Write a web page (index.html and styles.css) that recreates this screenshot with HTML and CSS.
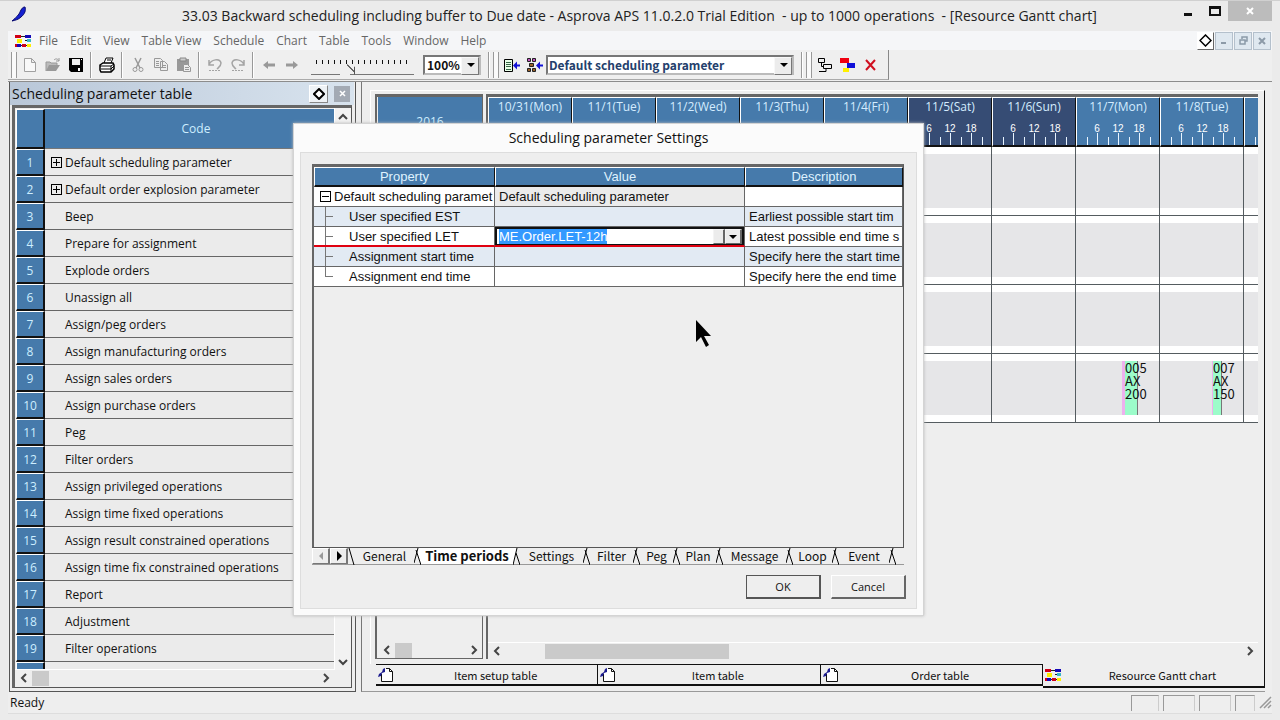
FILE: index.html
```html
<!DOCTYPE html>
<html lang="en">
<head>
    <meta charset="UTF-8">
    <meta name="viewport" content="width=device-width, initial-scale=1.0">
    <title>Asprova APS - Resource Gantt chart</title>
    <link rel="stylesheet" href="styles.css">
</head>
<body>
    <!-- Shared icons -->
    <svg class="sprite" aria-hidden="true">
        <symbol id="left" viewBox="0 0 10 10"><path d="M7 1L3 5l4 4" fill="none" stroke="#444" stroke-width="2"/></symbol>
        <symbol id="right" viewBox="0 0 10 10"><path d="M3 1l4 4-4 4" fill="none" stroke="#444" stroke-width="2"/></symbol>
        <symbol id="up" viewBox="0 0 10 10"><path d="M1 7l4-4 4 4" fill="none" stroke="#444" stroke-width="2"/></symbol>
        <symbol id="down" viewBox="0 0 10 10"><path d="M1 3l4 4 4-4" fill="none" stroke="#444" stroke-width="2"/></symbol>
        <symbol id="diamond" viewBox="0 0 12 12"><path d="M6 1l5 5-5 5-5-5z" fill="#fff" stroke="#000" stroke-width="2"/></symbol>
        <symbol id="gantt" viewBox="0 0 16 12">
            <path d="M4 1.500h8M10 5.500h3M3 10.500h10" stroke="#222"/>
            <path d="M0 0h6v3H0zM7 9h4v3H7z" fill="#d00018"/>
            <path d="M10 0h6v3h-6zM2 9h4v3H2z" fill="#1408b8"/>
            <path d="M2 4h5v4H2zM12 9h4v3h-4z" fill="#fff000"/>
            <path d="M12 4h4v3h-4z" fill="#38b8c8"/>
            <path d="M0 9h2v3H0z" fill="#d00018"/>
        </symbol>
        <symbol id="sheet" viewBox="0 0 16 16">
            <path d="M3.500 7v7.500h11V4.500l-3-3H8" fill="#fff" stroke="#111"/>
            <path d="M11.500 1.500v3h3" fill="none" stroke="#111"/>
            <path d="M7 1v4L4 6l-1 3-3 1 1-3 3-2 1-3z" fill="#1c1c90"/>
        </symbol>
    </svg>

    <div class="window">
        <!-- Title bar -->
        <header class="titlebar">
            <svg class="app-icon" viewBox="0 0 16 16"><path d="M14 1c1 3 0 7-4 10-3 3-6 3-9 4 2-2 5-4 7-7 2-4 3-7 6-7z" fill="#1420d0" stroke="#08086c"/></svg>
            <h1>33.03 Backward scheduling including buffer to Due date - Asprova APS 11.0.2.0 Trial Edition &nbsp;- up to 1000 operations &nbsp;- [Resource Gantt chart]</h1>
            <div class="win-buttons">
                <button aria-label="Minimize"><svg width="10" height="10"><path d="M1 8.500h8" stroke="#111" stroke-width="3"/></svg></button>
                <button aria-label="Maximize"><svg width="12" height="10"><path d="M1 1h10v8H1zM1 2h10" fill="none" stroke="#111" stroke-width="2"/></svg></button>
                <button class="close" aria-label="Close"><svg width="8" height="8"><path d="M1 1l6 6M7 1L1 7" stroke="#fff" stroke-width="2"/></svg></button>
            </div>
        </header>

        <!-- Menu bar -->
        <nav class="menubar">
            <svg class="gantt-icon"><use href="#gantt"/></svg>
            <button>File</button>
            <button>Edit</button>
            <button>View</button>
            <button>Table View</button>
            <button>Schedule</button>
            <button>Chart</button>
            <button>Table</button>
            <button>Tools</button>
            <button>Window</button>
            <button>Help</button>
            <div class="mdi-buttons">
                <button class="pin" aria-label="Pin"><svg width="13" height="13" viewBox="0 0 13 13"><path d="M6.500 1L12 6.500 6.500 12 1 6.500z" fill="none" stroke="#000" stroke-width="1.500"/></svg></button>
                <button aria-label="Minimize chart"><svg width="8" height="8"><path d="M1 6h5" stroke="#8c9aa8" stroke-width="2"/></svg></button>
                <button aria-label="Restore chart"><svg width="9" height="9"><path d="M3 3V1h5v4H6M1 4h5v4H1z" fill="none" stroke="#8c9aa8" stroke-width="1.500"/></svg></button>
                <button aria-label="Close chart"><svg width="8" height="8"><path d="M1 1l6 6M7 1L1 7" stroke="#8c9aa8" stroke-width="2"/></svg></button>
            </div>
        </nav>

        <!-- Tool bar -->
        <div class="toolbar">
            <div class="tools">
                <span class="grip"></span>
                <button aria-label="New"><svg width="16" height="16"><path d="M2.500 1.500h7l4 4v9h-11zM9.500 1.500v4h4" fill="#f8f8f8" stroke="#a0a0a0"/></svg></button>
                <button aria-label="Open"><svg width="16" height="16"><path d="M1 14V5h4l1 1h6v2" fill="#bbb" stroke="#999"/><path d="M1 14l3-6h11l-4 6z" fill="#999"/><path d="M9 3c2-2 4-1 5 1m0-3v3h-3" fill="none" stroke="#999"/></svg></button>
                <button aria-label="Save"><svg width="16" height="16"><path d="M1 1h14v14H3l-2-2z" fill="#000"/><path d="M4 2h8v6H4z" fill="#eee"/><path d="M10 11h2v3h-2zM13 2h1v1h-1z" fill="#fff"/></svg></button>
                <span class="sep"></span>
                <button aria-label="Print"><svg width="16" height="16"><path d="M5 6l2-5h7l-2 5" fill="#fff" stroke="#000"/><path d="M1 8l3-2h10l1 2v4l-3 3H2l-1-2z" fill="#fff" stroke="#000" stroke-width="1.500"/><path d="M1 9h11l3-2M2 12h10l3-3M8 3h4M12 9v6" fill="none" stroke="#000"/></svg></button>
                <span class="sep"></span>
                <button aria-label="Cut"><svg width="16" height="16"><path d="M5 1l5 10M11 1L6 11" stroke="#999" stroke-width="1.500"/><circle cx="5" cy="12.500" r="2" fill="none" stroke="#999"/><circle cx="11" cy="12.500" r="2" fill="none" stroke="#999"/></svg></button>
                <button aria-label="Copy"><svg width="16" height="16"><path d="M1.500 1.500h6l2 2v7h-8zM7.500 4.500h4l3 3v6h-7z" fill="#eee" stroke="#999"/><path d="M3 4.500h3M3 6.500h3M3 8.500h3M9 8.500h4M9 10.500h4" stroke="#999"/></svg></button>
                <button aria-label="Paste"><svg width="16" height="16"><path d="M1 2h12v12H1z" fill="#999"/><path d="M4 1h6v3H4z" fill="#ccc" stroke="#888"/><path d="M7.500 7.500h4l3 3v4h-7z" fill="#eee" stroke="#999"/><path d="M9 10.500h4M9 12.500h4" stroke="#999"/></svg></button>
                <span class="sep"></span>
                <button aria-label="Undo"><svg width="16" height="16"><path d="M2 3v5h5M2 8c2-6 11-7 12-2 0 3-2 4-4 6" fill="none" stroke="#a4a4a4" stroke-width="1.500"/><path d="M2 13.500h12" stroke="#a4a4a4" stroke-dasharray="2 1"/></svg></button>
                <button aria-label="Redo"><svg width="16" height="16"><path d="M14 3v5H9M14 8C12 2 3 1 2 6c0 3 2 4 4 6" fill="none" stroke="#a4a4a4" stroke-width="1.500"/><path d="M2 13.500h12" stroke="#a4a4a4" stroke-dasharray="2 1"/></svg></button>
                <span class="sep"></span>
                <button aria-label="Back"><svg width="16" height="16"><path d="M2 8l5-4v2.500h7v3H7V12z" fill="#999"/></svg></button>
                <button aria-label="Forward"><svg width="16" height="16"><path d="M14 8L9 4v2.500H2v3h7V12z" fill="#999"/></svg></button>
                <input class="zoom-slider" type="range" min="0" max="100" value="36" aria-label="Zoom">
                <span class="combo zoom"><select aria-label="Zoom level"><option>100%</option></select></span>
                <span class="sep"></span>
                <span class="grip"></span>
                <button aria-label="Reschedule"><svg width="17" height="16"><path d="M1.500 2.500h8v12h-8z" fill="#e8ffe8" stroke="#000"/><path d="M3 5.500h5M3 7.500h5M3 9.500h5M3 12.500h5" stroke="#386848"/><path d="M10 8.500l4-4v3h3v2h-3v3z" fill="#1414d8"/></svg></button>
                <button aria-label="Explode"><svg width="17" height="16"><path d="M1.500 1.500h3v3h-3zM6.500 1.500h3v3h-3z" fill="#c050c0" stroke="#222"/><path d="M3.500 6.500h4v3h-4zM1.500 11.500h3v3h-3zM6.500 11.500h3v3h-3z" fill="#986028" stroke="#222"/><path d="M10 8.500l4-4v3h3v2h-3v3z" fill="#1414d8"/></svg></button>
                <span class="combo param"><select aria-label="Scheduling parameter"><option>Default scheduling parameter</option></select></span>
                <span class="sep"></span>
                <span class="grip"></span>
                <button aria-label="Link"><svg width="16" height="16"><path d="M1.500 1.500h6v4h-6zM6.500 7.500h8v4h-8zM4.500 5.500v4h2M2 14.500h7v-3" fill="none" stroke="#000"/></svg></button>
                <button aria-label="Bars"><svg width="16" height="16"><path d="M0 1h9v5H0z" fill="#f00010"/><path d="M7 6h8v5H7z" fill="#1010d8"/><path d="M3 11h6v4H3z" fill="#fff000"/></svg></button>
                <button aria-label="Delete"><svg width="16" height="16"><path d="M3 3l9 10M12 3L3 13" stroke="#d01020" stroke-width="2"/></svg></button>
            </div>
        </div>

        <!-- Main area -->
        <main class="workspace">
            <section class="param-panel">
                <div class="panel-title">
                    <h2>Scheduling parameter table</h2>
                    <button class="pin" aria-label="Pin panel"><svg width="12" height="12"><use href="#diamond"/></svg></button>
                    <button class="panel-close" aria-label="Close panel"><svg width="7" height="7"><path d="M1 1l5 5M6 1L1 6" stroke="#fff" stroke-width="1.500"/></svg></button>
                </div>
                <div class="param-frame">
                    <div class="param-view">
                        <table class="param-table">
                            <thead><tr><th></th><th>Code</th></tr></thead>
                            <tbody>
                                <tr><th>1</th><td><span class="box plus"></span>Default scheduling parameter</td></tr>
                                <tr><th>2</th><td><span class="box plus"></span>Default order explosion parameter</td></tr>
                                <tr><th>3</th><td>Beep</td></tr>
                                <tr><th>4</th><td>Prepare for assignment</td></tr>
                                <tr><th>5</th><td>Explode orders</td></tr>
                                <tr><th>6</th><td>Unassign all</td></tr>
                                <tr><th>7</th><td>Assign/peg orders</td></tr>
                                <tr><th>8</th><td>Assign manufacturing orders</td></tr>
                                <tr><th>9</th><td>Assign sales orders</td></tr>
                                <tr><th>10</th><td>Assign purchase orders</td></tr>
                                <tr><th>11</th><td>Peg</td></tr>
                                <tr><th>12</th><td>Filter orders</td></tr>
                                <tr><th>13</th><td>Assign privileged operations</td></tr>
                                <tr><th>14</th><td>Assign time fixed operations</td></tr>
                                <tr><th>15</th><td>Assign result constrained operations</td></tr>
                                <tr><th>16</th><td>Assign time fix constrained operations</td></tr>
                                <tr><th>17</th><td>Report</td></tr>
                                <tr><th>18</th><td>Adjustment</td></tr>
                                <tr><th>19</th><td>Filter operations</td></tr>
                                <tr><th></th><td></td></tr>
                            </tbody>
                        </table>
                    </div>
                    <div class="vscroll">
                        <button aria-label="Scroll up"><svg width="10" height="10"><use href="#up"/></svg></button>
                        <button aria-label="Scroll down"><svg width="10" height="10"><use href="#down"/></svg></button>
                    </div>
                    <div class="hscroll">
                        <button aria-label="Scroll left"><svg width="10" height="10"><use href="#left"/></svg></button>
                        <span class="thumb small"></span>
                        <button class="end" aria-label="Scroll right"><svg width="10" height="10"><use href="#right"/></svg></button>
                    </div>
                </div>
            </section>

            <section class="chart-panel">
                <div class="chart-body">
                    <div class="resource-pane">
                        <div class="year">2016</div>
                        <div class="hscroll">
                            <button aria-label="Scroll left"><svg width="10" height="10"><use href="#left"/></svg></button>
                            <span class="thumb small"></span>
                            <button class="end" aria-label="Scroll right"><svg width="10" height="10"><use href="#right"/></svg></button>
                        </div>
                    </div>
                    <div class="gantt-pane">
                        <div class="gantt-view">
                            <table class="gantt">
                                <thead><tr id="days"></tr></thead>
                                <tbody id="resources"></tbody>
                            </table>
                        </div>
                        <div class="hscroll">
                            <button aria-label="Scroll left"><svg width="10" height="10"><use href="#left"/></svg></button>
                            <span class="thumb large"></span>
                            <button class="end" aria-label="Scroll right"><svg width="10" height="10"><use href="#right"/></svg></button>
                        </div>
                    </div>
                </div>
                <div class="doc-tabs">
                    <button><svg class="sheet-icon"><use href="#sheet"/></svg><span>Item setup table</span></button>
                    <button><svg class="sheet-icon"><use href="#sheet"/></svg><span>Item table</span></button>
                    <button><svg class="sheet-icon"><use href="#sheet"/></svg><span>Order table</span></button>
                    <button class="active"><svg class="gantt-icon"><use href="#gantt"/></svg><span>Resource Gantt chart</span></button>
                </div>
            </section>
        </main>

        <!-- Status bar -->
        <footer class="statusbar">
            <span class="status-text">Ready</span>
            <span class="cell"></span>
            <span class="cell wide"></span>
            <span class="cell wide"></span>
            <span class="cell narrow"></span>
            <svg width="13" height="13"><path d="M1 12L12 1M5 12l7-7M9 12l3-3" stroke="#999" stroke-width="1.500"/></svg>
        </footer>
    </div>

    <!-- Settings dialog -->
    <div class="dialog" role="dialog" aria-labelledby="dialog-title">
        <h2 id="dialog-title">Scheduling parameter Settings</h2>
        <div class="dialog-body">
            <div class="prop-frame">
                <table class="prop-table">
                    <thead>
                        <tr><th class="c-prop">Property</th><th class="c-value">Value</th><th>Description</th></tr>
                    </thead>
                    <tbody>
                        <tr class="root"><td><span class="box"></span>Default scheduling paramet</td><td>Default scheduling parameter</td><td></td></tr>
                        <tr class="alt"><td class="branch">User specified EST</td><td></td><td>Earliest possible start tim</td></tr>
                        <tr class="marked">
                            <td class="branch"><label for="let">User specified LET</label></td>
                            <td class="edit">
                                <div class="editor">
                                    <input id="let" type="text" value="ME.Order.LET-12h" spellcheck="false">
                                    <button class="more" aria-label="Edit expression"></button>
                                    <button class="drop" aria-label="Choose value"></button>
                                </div>
                            </td>
                            <td>Latest possible end time s</td>
                        </tr>
                        <tr class="alt"><td class="branch">Assignment start time</td><td></td><td>Specify here the start time</td></tr>
                        <tr><td class="branch last">Assignment end time</td><td></td><td>Specify here the end time</td></tr>
                    </tbody>
                </table>
            </div>
            <div class="prop-tabs">
                <button class="arrow" aria-label="Previous tab"><svg width="8" height="10"><path d="M6 1v8L2 5z" fill="#999"/></svg></button>
                <button class="arrow" aria-label="Next tab"><svg width="8" height="10"><path d="M2 0v10l5-5z" fill="#000"/></svg></button>
                <svg class="slant" viewBox="0 0 7 17"><path d="M1 0l5 17" fill="none" stroke="#000"/></svg>
                <button class="w-general">General</button>
                <svg class="slant" viewBox="0 0 7 17"><path d="M2 2L4 0h3v17z" fill="#fff"/><path d="M0 15L4 0M2 2l5 15" fill="none" stroke="#000"/></svg>
                <button class="w-time active">Time periods</button>
                <svg class="slant" viewBox="0 0 7 17"><path d="M0 0h4L0 17z" fill="#fff"/><path d="M0 17L4 0M3 5l4 12" fill="none" stroke="#000"/></svg>
                <button class="w-settings">Settings</button>
                <svg class="slant" viewBox="0 0 7 17"><path d="M0 15L4 0M2 2l5 15" fill="none" stroke="#000"/></svg>
                <button class="w-filter">Filter</button>
                <svg class="slant" viewBox="0 0 7 17"><path d="M0 15L4 0M2 2l5 15" fill="none" stroke="#000"/></svg>
                <button class="w-peg">Peg</button>
                <svg class="slant" viewBox="0 0 7 17"><path d="M0 15L4 0M2 2l5 15" fill="none" stroke="#000"/></svg>
                <button class="w-plan">Plan</button>
                <svg class="slant" viewBox="0 0 7 17"><path d="M0 15L4 0M2 2l5 15" fill="none" stroke="#000"/></svg>
                <button class="w-message">Message</button>
                <svg class="slant" viewBox="0 0 7 17"><path d="M0 15L4 0M2 2l5 15" fill="none" stroke="#000"/></svg>
                <button class="w-loop">Loop</button>
                <svg class="slant" viewBox="0 0 7 17"><path d="M0 15L4 0M2 2l5 15" fill="none" stroke="#000"/></svg>
                <button class="w-event">Event</button>
                <svg class="slant" viewBox="0 0 7 17"><path d="M0 15L4 0M2 2l5 15" fill="none" stroke="#000"/></svg>
            </div>
            <div class="dialog-buttons">
                <button class="default">OK</button>
                <button>Cancel</button>
            </div>
        </div>
        <svg class="cursor" viewBox="0 0 16 28"><path d="M1 0v22l5-5 5 10 3-2-5-9h7z" fill="#000"/></svg>
    </div>

    <script>
        // Gantt chart: one column per day, one row per resource
        const days = ["10/31(Mon)", "11/1(Tue)", "11/2(Wed)", "11/3(Thu)", "11/4(Fri)",
            "11/5(Sat)", "11/6(Sun)", "11/7(Mon)", "11/8(Tue)", ""];
        const operations = {
            7: { start: 46, width: 16, buffer: 3, lines: ["005", "AX", "200"] },
            8: { start: 52, width: 10, buffer: 1, lines: ["007", "AX", "150"] }
        };

        // Ticks every 3 hours, taller ones every 6 hours
        function drawScale(last) {
            let scale = "";
            for (let i = 1; i <= last; i++) {
                const x = Math.round(i * 10.5) - 1;
                scale += `<path d="M${x}.5 ${i % 2 ? 18 : 14}V26" stroke="#e8f4ff"/>`;
                if (i % 2 === 0) {
                    scale += `<text x="${x}" y="13" text-anchor="middle">${i * 3}</text>`;
                }
            }
            return scale;
        }

        const dayRow = document.getElementById("days");
        days.forEach(day => {
            const th = document.createElement("th");
            if (/Sat|Sun/.test(day)) {
                th.classList.add("holiday");
            }
            th.innerHTML = `<div class="date">${day}</div><svg class="scale">${drawScale(day ? 7 : 1)}</svg>`;
            dayRow.appendChild(th);
        });

        const body = document.getElementById("resources");
        for (let r = 0; r < 4; r++) {
            const tr = document.createElement("tr");
            days.forEach((day, d) => {
                const td = document.createElement("td");
                const op = operations[d];
                if (r === 3 && op) {
                    td.innerHTML = `<div class="operation" style="margin-left:${op.start}px;width:${op.width}px;border-left-width:${op.buffer}px">${op.lines.join("<br>")}</div>`;
                }
                tr.appendChild(td);
            });
            body.appendChild(tr);
        }

        // Start editing the LET expression
        const letInput = document.getElementById("let");
        letInput.focus();
        letInput.select();
    </script>
</body>
</html>
```
FILE: styles.css
```css
* {
    box-sizing: border-box;
}
body {
    margin: 0;
    height: 100vh;
    overflow: hidden;
    background-color: #ebebeb;
    font-family: "Open Sans", "Noto Sans", sans-serif;
    font-size: 12px;
    color: #111;
}
button {
    margin: 0;
    padding: 0;
    border: none;
    background: none;
    font: inherit;
    color: inherit;
}
button svg {
    display: block;
    margin: auto;
}
h1, h2 {
    margin: 0;
    font-weight: normal;
}
table {
    border-collapse: separate;
    border-spacing: 0;
    table-layout: fixed;
}
th, td {
    padding: 0;
    font-weight: normal;
    overflow: hidden;
    white-space: nowrap;
}
.sprite {
    position: absolute;
    width: 0;
    height: 0;
}
.window {
    display: flex;
    flex-direction: column;
    height: 100vh;
    padding: 0 8px 6px;
    border-top: 1px solid #d0d0d0;
}

/* Title bar */
.titlebar {
    display: flex;
    align-items: flex-start;
    height: 30px;
}
.app-icon {
    width: 16px;
    height: 16px;
    margin: 5px 0 0 3px;
}
.titlebar h1 {
    flex: 1;
    padding-left: 78px;
    font-size: 14px;
    line-height: 30px;
    text-align: center;
    white-space: nowrap;
    color: #222;
}
.win-buttons {
    display: flex;
}
.win-buttons button {
    width: 27px;
    height: 20px;
}
.win-buttons .close {
    width: 44px;
    background-color: #bcbcbc;
}

/* Menu bar */
.menubar {
    display: flex;
    align-items: center;
    height: 19px;
    padding-left: 7px;
    background-color: #f5f6f8;
    color: #666;
}
.gantt-icon {
    width: 16px;
    height: 12px;
}
.menubar > .gantt-icon {
    margin-right: 2px;
}
.menubar > button {
    padding: 0 6px;
}
.mdi-buttons {
    display: flex;
    gap: 1px;
    margin-left: auto;
    padding-right: 1px;
}
.mdi-buttons button {
    width: 18px;
    height: 18px;
    background-color: #dfe8f0;
    border: 1px solid #b4c0cc;
}
.mdi-buttons .pin {
    width: 17px;
    background-color: #fff;
    border: 1px solid #fff;
    border-right-color: #666;
    border-bottom-color: #666;
}

/* Tool bar */
.toolbar {
    height: 32px;
    border-bottom: 1px solid #8c8c8c;
    background-color: #efefef;
}
.tools {
    display: flex;
    align-items: center;
    width: max-content;
    height: 30px;
    padding: 0 6px 0 3px;
    border-right: 1px solid #888;
    border-bottom: 1px solid #aaa;
}
.tools button {
    width: 23px;
    height: 24px;
}
.grip {
    width: 6px;
    height: 26px;
    margin-right: 1px;
    border-left: 1px solid #999;
    border-right: 1px solid #999;
    background-color: #fafafa;
}
.sep {
    width: 2px;
    height: 26px;
    margin: 0 3px;
    border-left: 1px solid #999;
    background-color: #fff;
}
.zoom-slider {
    appearance: none;
    width: 103px;
    height: 22px;
    margin: 0 9px 0 8px;
    background:
        repeating-linear-gradient(90deg, #111 0 1px, transparent 1px 6px) 5px 6px / 96px 4px no-repeat,
        linear-gradient(#777, #777) 0 20px / 29px 1px no-repeat,
        linear-gradient(#777, #777) 39px 20px / 64px 1px no-repeat;
}
.zoom-slider::-webkit-slider-thumb {
    appearance: none;
    width: 11px;
    height: 12px;
    margin-top: 8px;
    background: linear-gradient(45deg, transparent 9px, #666 9px 10px, transparent 10px) no-repeat;
    border-right: 1px solid #555;
    clip-path: polygon(0 40%, 50% 0, 100% 40%, 100% 100%, 0 100%);
}
.combo {
    position: relative;
    display: inline-block;
    height: 20px;
    border: 2px solid #777;
    border-right-color: #bbb;
    border-bottom-color: #bbb;
    background-color: #fff;
}
.combo select {
    appearance: none;
    display: block;
    width: 100%;
    height: 16px;
    padding: 0 2px;
    border: none;
    background: none;
    font-family: "Noto Sans CJK JP", sans-serif;
    font-size: 12px;
    font-weight: bold;
    line-height: 16px;
    color: #111;
}
.combo::after {
    content: "";
    position: absolute;
    top: 0;
    right: 0;
    width: 16px;
    height: 16px;
    border: 1px solid #f8f8f8;
    border-right-color: #777;
    border-bottom-color: #777;
    background-color: #ececec;
    pointer-events: none;
}
.combo::before {
    content: "";
    position: absolute;
    z-index: 1;
    top: 6px;
    right: 4px;
    border: 4px solid transparent;
    border-top-color: #000;
    border-bottom: 0;
    pointer-events: none;
}
.combo.zoom {
    width: 58px;
    margin-right: 4px;
}
.combo.param {
    width: 248px;
    margin-right: 4px;
}
.combo.param select {
    padding: 0 1px;
    color: #24406c;
}

/* Main area */
.workspace {
    display: flex;
    flex: 1;
    min-height: 0;
    gap: 5px;
    padding-left: 1px;
    background-color: #eee;
}
.param-panel {
    display: flex;
    flex-direction: column;
    flex: none;
    width: 347px;
    padding: 0 3px 3px 2px;
    border: 1px solid #555;
    border-top: none;
}
.panel-title {
    display: flex;
    align-items: center;
    height: 23px;
    margin: 0 -2px;
    background-image: linear-gradient(90deg, #b9c7d8, #d8e3ee);
}
.panel-title h2 {
    flex: 1;
    padding-left: 2px;
    font-size: 14px;
    line-height: 22px;
}
.panel-title .pin {
    width: 19px;
    height: 18px;
    margin-right: 6px;
    border: 1px solid #fff;
    border-right-color: #888;
    border-bottom-color: #888;
    background-color: #eef2f6;
}
.panel-close {
    width: 16px;
    height: 16px;
    margin-right: 4px;
    background-color: #a3aab4;
}
.param-frame {
    display: grid;
    grid-template-columns: 1fr 17px;
    grid-template-rows: 1fr 17px;
    flex: 1;
    min-height: 0;
    border: 1px solid #555;
    border-width: 3px 1px 1px 3px;
    border-top-color: #666;
    border-left-color: #666;
}
.param-view {
    overflow: hidden;
    min-width: 0;
    min-height: 0;
    padding: 1px 0 0 1px;
    border-bottom: 1px solid #fff;
}
.param-table {
    width: 331px;
}
.param-table th {
    width: 29px;
    height: 27px;
    border: 1px solid #fff;
    border-right: 2px solid #111;
    border-bottom: 2px solid #111;
    background-color: #467aab;
    color: #cdeeff;
}
.param-table thead th {
    height: 40px;
}
.param-table thead th + th {
    width: auto;
    border: none;
    border-bottom: 1px solid #777;
}
.param-table td {
    height: 27px;
    padding-left: 20px;
    border-bottom: 1px solid #666;
    background-color: #ebebeb;
}
.box {
    display: inline-block;
    width: 11px;
    height: 11px;
    border: 1px solid #000;
    vertical-align: -1px;
    background: linear-gradient(#000, #000) center / 7px 1px no-repeat;
}
.box.plus {
    margin: 0 3px 0 -14px;
    background:
        linear-gradient(#000, #000) center / 7px 1px no-repeat,
        linear-gradient(#000, #000) center / 1px 7px no-repeat;
}
.vscroll {
    display: flex;
    flex-direction: column;
    justify-content: space-between;
    background-color: #f2f2f2;
    border-left: 1px solid #fff;
}
.vscroll button {
    height: 17px;
}
.hscroll {
    display: flex;
    align-items: center;
    height: 16px;
    background-color: #eee;
}
.hscroll button {
    width: 17px;
}
.hscroll .end {
    margin-left: auto;
}
.thumb {
    height: 15px;
    background-color: #cacaca;
}
.thumb.small {
    width: 17px;
}
.thumb.large {
    width: 184px;
    margin-left: 40px;
}

/* Gantt chart */
.chart-panel {
    display: flex;
    flex-direction: column;
    flex: 1;
    min-width: 0;
    margin-right: 7px;
    padding-top: 8px;
    border-left: 1px solid #777;
    border-bottom: 1px solid #999;
}
.chart-body {
    display: flex;
    flex: 1;
    min-height: 0;
    gap: 3px;
    margin-left: 8px;
    padding: 3px 6px 5px 4px;
    border-left: 1px solid #fff;
    border-top: 1px solid #fff;
    border-right: 1px solid #111;
}
.resource-pane {
    display: flex;
    flex-direction: column;
    justify-content: space-between;
    width: 108px;
    padding-left: 1px;
    border: 1px solid #666;
    border-top-width: 3px;
    border-left-width: 2px;
}
.year {
    height: 50px;
    background-color: #467aab;
    line-height: 50px;
    text-align: center;
    color: #cdeeff;
}
.gantt-pane {
    display: flex;
    flex-direction: column;
    flex: 1;
    min-width: 0;
    border-top: 3px solid #666;
    border-left: 2px solid #666;
}
.gantt-view {
    flex: 1;
    overflow: hidden;
    border-bottom: 1px solid #fff;
}
.gantt {
    width: 840px;
}
.gantt th {
    height: 50px;
    border-top: 1px solid #fff;
    border-left: 1px solid #fff;
    border-right: 1px solid #111;
    border-bottom: 2px solid #111;
    background-color: #467aab;
    color: #d4ecff;
    vertical-align: top;
}
.gantt .holiday {
    background-color: #364c74;
}
.date {
    height: 21px;
    line-height: 18px;
}
.scale {
    display: block;
    width: 82px;
    height: 26px;
    font-family: "Liberation Sans", sans-serif;
    font-size: 10px;
    fill: #fff;
}
.gantt td {
    height: 69px;
    padding-top: 7px;
    border-right: 1px solid #555c60;
    border-bottom: 1px solid #555c60;
    background-image: linear-gradient(#fff 7px, #e6e6e8 7px 61px, #fff 61px);
    overflow: visible;
    vertical-align: top;
}
.operation {
    height: 54px;
    border-left: 3px solid #eeb0ee;
    border-right: 1px solid #777;
    background-color: #9cfcca;
    background-clip: padding-box;
    font-family: "Noto Sans CJK JP", sans-serif;
    font-size: 13px;
    line-height: 13px;
}

/* Document tabs */
.doc-tabs {
    display: flex;
    height: 27px;
    padding: 0 0 3px 14px;
    font-family: "Noto Sans CJK JP", sans-serif;
    font-size: 11px;
}
.doc-tabs button {
    display: flex;
    align-items: center;
    flex: 1;
    height: 22px;
    padding-left: 2px;
    border: 1px solid #111;
    border-left: none;
    border-bottom-width: 2px;
}
.doc-tabs span {
    flex: 1;
    text-align: center;
}
.doc-tabs .active {
    height: 24px;
    border-top: none;
}
.doc-tabs svg {
    margin: 0;
}
.sheet-icon {
    width: 16px;
    height: 16px;
}

/* Status bar */
.statusbar {
    display: flex;
    align-items: center;
    height: 22px;
    gap: 4px;
    background-color: #eee;
    border-bottom: 1px solid #ddd;
}
.status-text {
    flex: 1;
    padding-left: 2px;
}
.cell {
    width: 28px;
    height: 16px;
    border-top: 1px solid #999;
    border-left: 1px solid #999;
    border-right: 1px solid #ccc;
}
.cell.wide {
    width: 32px;
}
.cell.narrow {
    width: 20px;
}

/* Settings dialog */
.dialog {
    position: absolute;
    top: 123px;
    left: 293px;
    width: 631px;
    padding: 0 6px 6px;
    background-color: #fbfbfb;
    border: 1px solid #d4d4d4;
    box-shadow: 0 0 3px #bbb;
}
.dialog h2 {
    height: 28px;
    font-size: 14px;
    line-height: 28px;
    text-align: center;
}
.dialog-body {
    padding: 11px 12px 9px 11px;
    border: 1px solid #ddd;
    background-color: #eee;
}
.prop-frame {
    height: 384px;
    border: 1px solid #555;
    border-top: 3px solid #666;
    border-left: 2px solid #666;
    font-family: "Liberation Sans", sans-serif;
    font-size: 13px;
}
.prop-table {
    width: 100%;
}
.prop-table th {
    height: 20px;
    border: 1px solid #fff;
    border-right-color: #111;
    border-bottom: 2px solid #111;
    background-color: #467aab;
    color: #dff2ff;
}
.c-prop {
    width: 181px;
}
.c-value {
    width: 250px;
}
.prop-table td {
    height: 20px;
    padding-left: 4px;
    border-right: 1px solid #666;
    border-bottom: 1px solid #666;
    background-color: #fff;
}
.prop-table .alt td {
    background-color: #e2eaf3;
}
.prop-table .root td:nth-child(2) {
    background-color: #ebebeb;
}
.prop-table .root td:first-child {
    padding-left: 6px;
}
.root .box {
    margin-right: 3px;
}
.prop-table .branch {
    padding-left: 35px;
    background-image: linear-gradient(#777, #777), linear-gradient(#777, #777);
    background-position: 11px 0, 11px 9px;
    background-size: 1px 20px, 8px 1px;
    background-repeat: no-repeat;
}
.prop-table .last {
    background-size: 1px 10px, 8px 1px;
}
.prop-table .marked td:not(:last-child) {
    border-bottom: 2px solid #e00010;
}
.prop-table .edit {
    padding: 0;
}
.editor {
    display: flex;
    height: 18px;
    border: 2px solid #111;
    border-bottom-width: 1px;
}
.editor input {
    flex: 1;
    min-width: 0;
    padding: 0 2px;
    border: none;
    outline: none;
    font-family: inherit;
    font-size: 13px;
}
.editor input::selection {
    background-color: #3399ff;
    color: #fff;
}
.editor button {
    border: 1px solid #f4f4f4;
    border-right: 2px solid #666;
    border-bottom-color: #666;
    background-color: #ececec;
}
.more {
    width: 12px;
}
.drop {
    width: 17px;
}
.drop::after {
    content: "";
    display: block;
    width: 0;
    margin: auto;
    border: 4px solid transparent;
    border-top-color: #000;
    border-bottom: 0;
}

/* Property tabs */
.prop-tabs {
    display: flex;
    height: 17px;
    border-bottom: 1px solid #999;
    font-family: "Noto Sans CJK JP", sans-serif;
    line-height: 16px;
}
.prop-tabs .arrow {
    width: 18px;
    border: 1px solid #fff;
    border-right: 2px solid #777;
    border-bottom-color: #777;
}
.slant {
    width: 7px;
    height: 17px;
}
.prop-tabs .active {
    background-color: #fff;
    font-size: 13px;
    font-weight: bold;
}
.w-general { width: 59px; }
.w-time { width: 92px; }
.w-settings { width: 63px; }
.w-filter { width: 43px; }
.w-peg { width: 33px; }
.w-plan { width: 36px; }
.w-message { width: 63px; }
.w-loop { width: 39px; }
.w-event { width: 50px; }
.dialog-buttons {
    display: flex;
    justify-content: flex-end;
    gap: 10px;
    margin: 10px -2px 0 0;
    font-size: 11px;
}
.dialog-buttons button {
    width: 75px;
    height: 24px;
    border: 1px solid #fff;
    border-right: 2px solid #666;
    border-bottom: 2px solid #666;
}
.dialog-buttons .default {
    border: 1px solid #555;
    border-right-width: 2px;
    border-bottom-width: 2px;
}
.cursor {
    position: absolute;
    top: 196px;
    left: 401px;
    width: 16px;
    height: 28px;
}
```
